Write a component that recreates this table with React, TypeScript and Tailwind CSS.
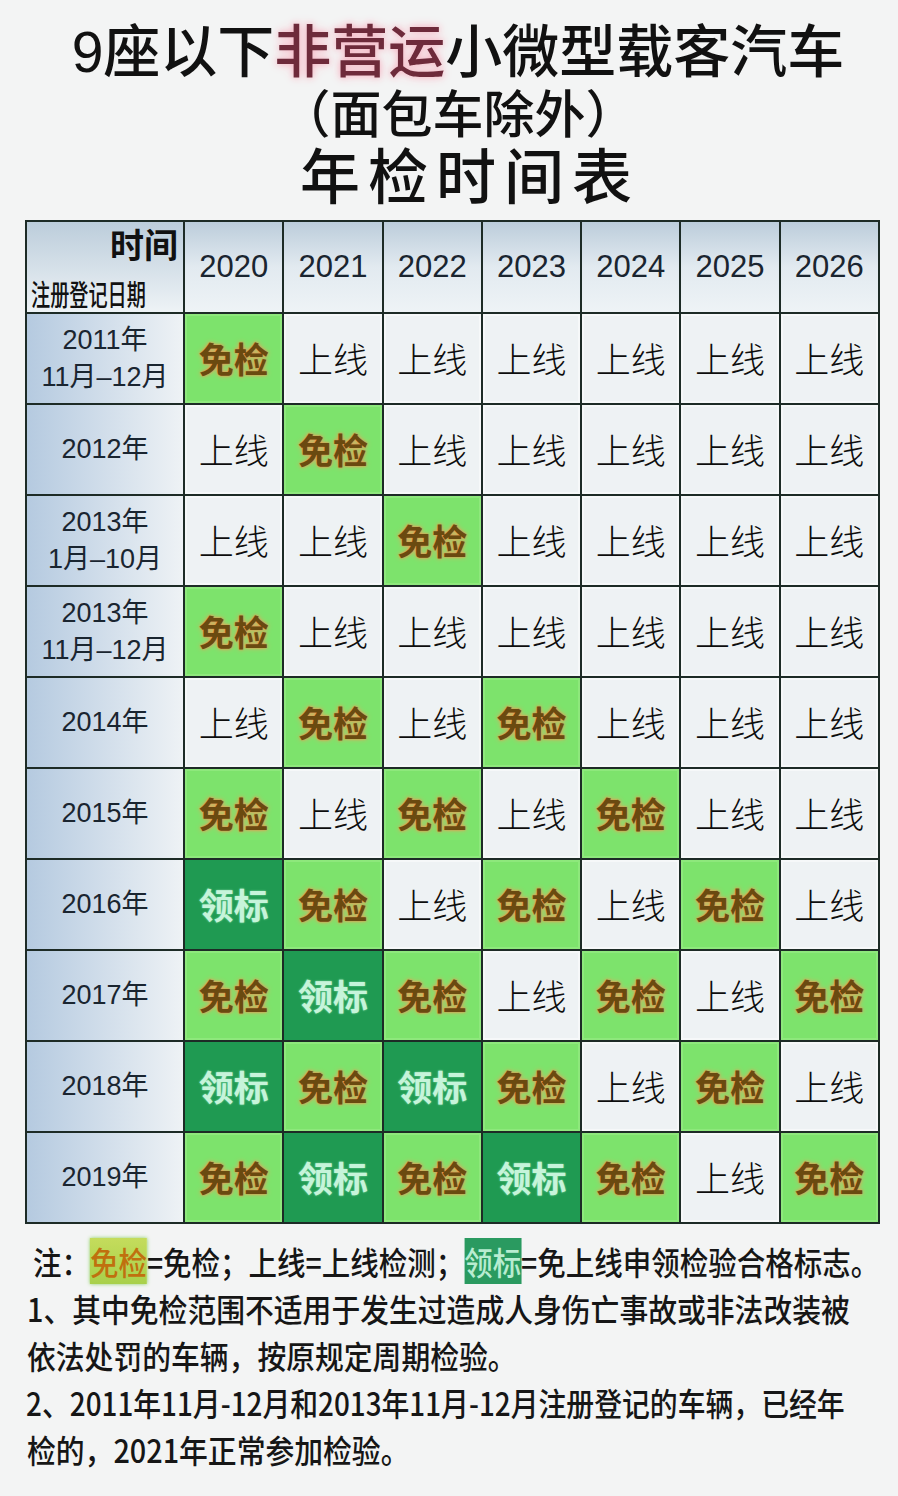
const YEARS = ["2020", "2021", "2022", "2023", "2024", "2025", "2026"];

type Mark = "F" | "S" | "L";

const ROWS: { label: string[]; marks: Mark[] }[] = [
  { label: ["2011年", "11月–12月"], marks: ["F", "S", "S", "S", "S", "S", "S"] },
  { label: ["2012年"], marks: ["S", "F", "S", "S", "S", "S", "S"] },
  { label: ["2013年", "1月–10月"], marks: ["S", "S", "F", "S", "S", "S", "S"] },
  { label: ["2013年", "11月–12月"], marks: ["F", "S", "S", "S", "S", "S", "S"] },
  { label: ["2014年"], marks: ["S", "F", "S", "F", "S", "S", "S"] },
  { label: ["2015年"], marks: ["F", "S", "F", "S", "F", "S", "S"] },
  { label: ["2016年"], marks: ["L", "F", "S", "F", "S", "F", "S"] },
  { label: ["2017年"], marks: ["F", "L", "F", "S", "F", "S", "F"] },
  { label: ["2018年"], marks: ["L", "F", "L", "F", "S", "F", "S"] },
  { label: ["2019年"], marks: ["F", "L", "F", "L", "F", "S", "F"] },
];

const CJK = "font-['Noto_Sans_CJK_SC',sans-serif]";
const LATIN = "font-['Liberation_Sans','Noto_Sans_CJK_SC',sans-serif]";

function Cell({ mark }: { mark: Mark }) {
  if (mark === "F") {
    return (
      <div className={`flex items-center justify-center bg-[#7de36c] shadow-[inset_0_0_0_2px_#8ee87c] ${CJK} text-[35px] font-bold text-[#6a4a10] [text-shadow:0_0_2px_#f08a40,0_0_5px_#f2a060]`}>
        免检
      </div>
    );
  }
  if (mark === "L") {
    return (
      <div className={`flex items-center justify-center bg-[#1f9a52] ${CJK} text-[35px] font-bold text-[#c6f4da] [text-shadow:0_0_2px_#8fe0b0]`}>
        领标
      </div>
    );
  }
  return (
    <div className={`flex items-center justify-center bg-[#eef2f4] shadow-[inset_0_0_0_2px_#f6f8f9] ${CJK} text-[35px] font-light text-[#0d0d0d]`}>
      上线
    </div>
  );
}

export default function App() {
  return (
    <div className="w-[898px] h-[1496px] bg-[#f3f4f4] text-[#111]">
      {/* title */}
      <div className={`pt-[21px] pb-[10px] text-center ${LATIN} font-medium`}>
        <div className="pl-[18px] text-[57px] leading-[63px] whitespace-nowrap">
          9座以下
          <span className="text-[#6e2b3b] [text-shadow:0_0_6px_#f5b3c2,0_0_12px_#f8cdd6]">非营运</span>
          小微型载客汽车
        </div>
        <div className="pl-[18px] text-[51px] leading-[63px]">（面包车除外）</div>
        <div className="pl-[42px] text-[60px] leading-[63px] tracking-[8px]">年检时间表</div>
      </div>

      {/* table */}
      <div className="ml-[25px] w-[855px] bg-[#1d2b26] p-[2px] grid grid-cols-[156px_repeat(7,1fr)] grid-rows-[90px_repeat(10,89px)] gap-[2px]">
        <div className="relative bg-gradient-to-b from-[#bccddb] to-[#eef3f6]">
          <span className={`absolute right-[5px] top-[2px] ${CJK} text-[34px] font-bold leading-[40px]`}>时间</span>
          <span className={`absolute left-[4px] bottom-[3px] ${CJK} text-[29px] leading-[32px] font-medium whitespace-nowrap origin-left scale-x-[0.66]`}>
            注册登记日期
          </span>
        </div>
        {YEARS.map((y) => (
          <div
            key={y}
            className={`flex items-center justify-center bg-gradient-to-b from-[#bccddb] via-[#e2eaf0] to-[#eef3f6] ${LATIN} text-[31px] text-[#1a2530]`}
          >
            {y}
          </div>
        ))}
        {ROWS.map((r) => (
          <>
            <div
              key={r.label.join()}
              className={`flex flex-col items-center justify-center bg-gradient-to-r from-[#b5cae0] to-[#eef2f5] ${LATIN} text-[27px] leading-[37px] text-[#1a2530]`}
            >
              {r.label.map((l) => (
                <div key={l}>{l}</div>
              ))}
            </div>
            {r.marks.map((m, i) => (
              <Cell key={r.label.join() + i} mark={m} />
            ))}
          </>
        ))}
      </div>

      {/* notes */}
      <div className={`mt-[14px] ${CJK} font-medium text-[32px] leading-[47px] text-[#161616]`}>
        <div className="pl-[37px] whitespace-nowrap origin-left scale-x-[0.89]">
          注：
          <span className="bg-gradient-to-b from-[#c4dc5c] to-[#a8d04a] text-[#c0700e] shadow-[0_0_4px_#8cd060]">免检</span>
          =免检；上线=上线检测；
          <span className="bg-[#2a9a60] text-[#b8ecd0]">领标</span>
          =免上线申领检验合格标志。
        </div>
        <div className="pl-[30px] whitespace-nowrap origin-left scale-x-[0.9]">
          1、其中免检范围不适用于发生过造成人身伤亡事故或非法改装被
        </div>
        <div className="pl-[30px] whitespace-nowrap origin-left scale-x-[0.9]">依法处罚的车辆，按原规定周期检验。</div>
        <div className="pl-[30px] whitespace-nowrap origin-left scale-x-[0.87]">
          2、2011年11月-12月和2013年11月-12月注册登记的车辆，已经年
        </div>
        <div className="pl-[30px] whitespace-nowrap origin-left scale-x-[0.9]">检的，2021年正常参加检验。</div>
      </div>
    </div>
  );
}
